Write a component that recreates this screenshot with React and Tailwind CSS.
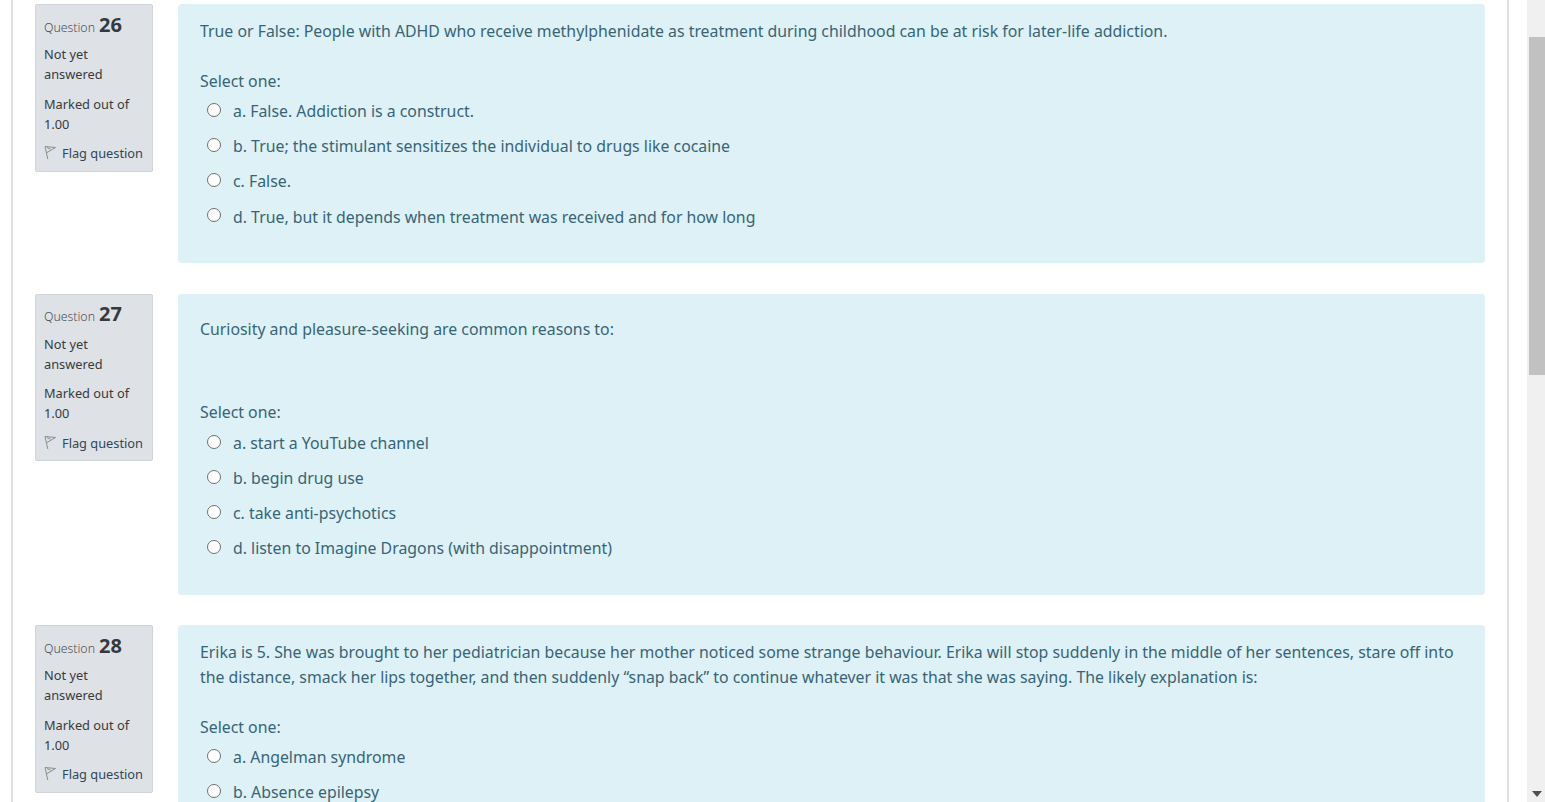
import { Fragment } from "react";

const questions = [
  {
    number: 26,
    prompt: [
      "True or False: People with ADHD who receive methylphenidate as treatment during childhood can be at risk for later-life addiction.",
    ],
    textClass: "pt-[15px]",
    promptClass: "mb-[25px]",
    selectClass: "mb-0",
    rowClass: "h-[35.2px]",
    answers: [
      "a. False. Addiction is a construct.",
      "b. True; the stimulant sensitizes the individual to drugs like cocaine",
      "c. False.",
      "d. True, but it depends when treatment was received and for how long",
    ],
    boxClass: "h-[259px] mb-[31px]",
    sideClass: "h-[168px]",
    markedClass: "mb-[9px]",
    titleClass: "pt-[2px]",
  },
  {
    number: 27,
    prompt: ["Curiosity and pleasure-seeking are common reasons to:"],
    textClass: "pt-[23px]",
    promptClass: "mb-[58px]",
    selectClass: "mb-[1px]",
    rowClass: "h-[35px]",
    answers: [
      "a. start a YouTube channel",
      "b. begin drug use",
      "c. take anti-psychotics",
      "d. listen to Imagine Dragons (with disappointment)",
    ],
    boxClass: "h-[301px] mb-[30px]",
    sideClass: "h-[167px]",
    markedClass: "-mt-[1px] mb-[10px]",
    titleClass: "pt-[1px]",
  },
  {
    number: 28,
    prompt: [
      "Erika is 5. She was brought to her pediatrician because her mother noticed some strange behaviour. Erika will stop suddenly in the middle of her sentences, stare off into",
      "the distance, smack her lips together, and then suddenly “snap back” to continue whatever it was that she was saying. The likely explanation is:",
    ],
    textClass: "pt-[15px]",
    promptClass: "mb-[25px]",
    selectClass: "mb-0",
    rowClass: "h-[35px]",
    answers: ["a. Angelman syndrome", "b. Absence epilepsy"],
    boxClass: "h-[300px]",
    sideClass: "h-[168px]",
    markedClass: "mb-[9px]",
    titleClass: "pt-[2px]",
  },
];

const FlagIcon = () => (
  <svg width="12" height="14" viewBox="0 0 12 14" fill="none" stroke="#8a8d90" strokeWidth="1" className="shrink-0">
    <path d="M1 0.5 L3.8 13 M1 0.5 L11.5 1.5 L2.5 6.8 M3 1.5 L6.5 3.2" />
  </svg>
);

const Sidebar = ({ q }) => (
  <div className={`w-[118px] shrink-0 bg-[#dee2e6] border border-[#ced4da] rounded-[2px] pl-[8px] pt-[8px] text-[12.8px] leading-[20px] text-[#373a3c] ${q.sideClass}`}>
    <div className={`flex items-baseline h-[26px] mb-[5px] ${q.titleClass}`}>
      <span className="text-[12.3px] font-light text-[#495057]">Question</span>
      <span className="ml-[4px] text-[20px] font-bold text-[#343a40]">{q.number}</span>
    </div>
    <div className="mb-[10px]">
      Not yet
      <br />
      answered
    </div>
    <div className={q.markedClass}>
      Marked out of
      <br />
      1.00
    </div>
    <div className="flex items-center gap-[6px] text-[#2f4858]">
      <FlagIcon />
      <span>Flag question</span>
    </div>
  </div>
);

const Radio = () => (
  <span className="w-[14px] h-[14px] mb-[4px] shrink-0 rounded-full border-[1.5px] border-[#707070] bg-white" />
);

const Question = ({ q }) => (
  <div className={`flex gap-[25px] ${q.boxClass}`}>
    <Sidebar q={q} />
    <div className={`flex-1 bg-[#def1f7] rounded-[4px] pl-[22px] text-[#386474] text-[15.85px] leading-[25px] overflow-hidden ${q.textClass}`}>
      <div className={q.promptClass}>
        {q.prompt.map((line) => (
          <Fragment key={line}>
            {line}
            <br />
          </Fragment>
        ))}
      </div>
      <div className={q.selectClass}>Select one:</div>
      <div className="flex flex-col">
        {q.answers.map((a) => (
          <div key={a} className={`flex items-center pl-[7px] gap-[12px] ${q.rowClass}`}>
            <Radio />
            <span>{a}</span>
          </div>
        ))}
      </div>
    </div>
  </div>
);

export default function App() {
  return (
    <div className="flex h-[802px] w-full overflow-hidden bg-white font-['Noto_Sans','Open_Sans',sans-serif]">
      <div className="flex-1 pl-[11px] pr-[18px]">
        <div className="h-full border-x-[2px] border-[#e0e0e0] pl-[22px] pr-[22px] pt-[4px] overflow-hidden">
          {questions.map((q) => (
            <Question key={q.number} q={q} />
          ))}
        </div>
      </div>
      <div className="w-[18px] shrink-0 bg-[#f0f0f0] flex flex-col pl-[2px]">
        <div className="mt-[37px] h-[338px] bg-[#c1c1c1]" />
        <div className="mt-auto mb-[5px] flex justify-center">
          <div className="w-0 h-0 border-x-[5px] border-x-transparent border-t-[6px] border-t-[#505050]" />
        </div>
      </div>
    </div>
  );
}
